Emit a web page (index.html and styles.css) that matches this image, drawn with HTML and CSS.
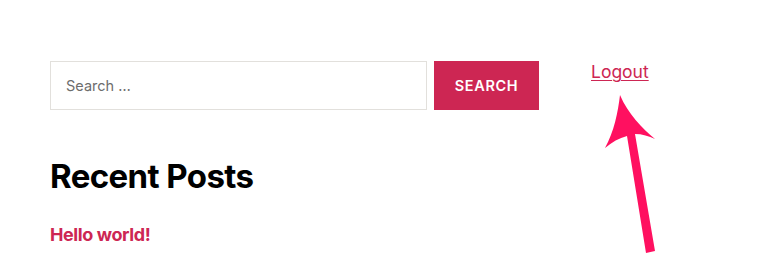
FILE: index.html
```html
<!DOCTYPE html>
<html lang="en">
<head>
<meta charset="utf-8">
<title>Recent Posts</title>
<link rel="stylesheet" href="styles.css">
</head>
<body>
<div class="page">
  <div class="top-row">
    <form class="search-form">
      <input class="search-field" type="search" placeholder="Search …">
      <button class="search-submit" type="button">Search</button>
    </form>
    <a class="logout" href="#">Logout</a>
  </div>
  <h2 class="widget-title">Recent Posts</h2>
  <ul class="post-list">
    <li><a href="#">Hello world!</a></li>
  </ul>
</div>
<svg class="arrow" width="768" height="273" viewBox="0 0 768 273" aria-hidden="true">
  <path d="M620 95 C618 112 614 132 605 148 C612 142 619 138 627 136 L646 253 L655 251 L635 134 C642 134 649 136 655 139 C642 128 628 114 620 95 Z" fill="#ff1060"/>
</svg>
</body>
</html>
```
FILE: styles.css
```css
html, body {
  margin: 0;
  padding: 0;
  background: #ffffff;
}
body {
  font-family: Inter, "Noto Sans", sans-serif;
  width: 768px;
  height: 273px;
  overflow: hidden;
  position: relative;
}
.page {
  padding: 61px 0 0 50px;
}
.top-row {
  display: flex;
  align-items: flex-start;
}
.search-form {
  display: flex;
  gap: 7px;
  margin: 0;
}
.search-field {
  box-sizing: border-box;
  width: 377px;
  height: 49px;
  border: 1px solid #e2e0dc;
  background: #fff;
  padding: 0 15px;
  font-family: Inter, sans-serif;
  font-size: 14.5px;
  color: #333;
  outline: none;
  margin: 0;
}
.search-field::placeholder {
  color: #6d6d6d;
  opacity: 1;
}
.search-submit {
  box-sizing: border-box;
  width: 105px;
  height: 49px;
  border: none;
  background: #cd2653;
  color: #fff;
  font-family: Inter, sans-serif;
  font-weight: 600;
  font-size: 14.5px;
  letter-spacing: 0.6px;
  text-transform: uppercase;
  margin: 0;
  padding: 0;
}
.logout {
  margin: 1px 0 0 52px;
  font-size: 17.5px;
  color: #cd2653;
  text-decoration: underline;
  text-underline-offset: 2px;
  text-decoration-thickness: 1px;
  line-height: 20px;
}
.widget-title {
  margin: 48px 0 0 0;
  font-size: 33px;
  font-weight: 700;
  letter-spacing: -0.6px;
  color: #000;
  line-height: 36px;
}
.post-list {
  list-style: none;
  margin: 30px 0 0 0;
  padding: 0;
}
.post-list a {
  color: #cd2653;
  font-weight: 700;
  font-size: 18px;
  letter-spacing: -0.4px;
  text-decoration: none;
  line-height: 22px;
}
.arrow {
  position: absolute;
  left: 0;
  top: 0;
  pointer-events: none;
}
```
